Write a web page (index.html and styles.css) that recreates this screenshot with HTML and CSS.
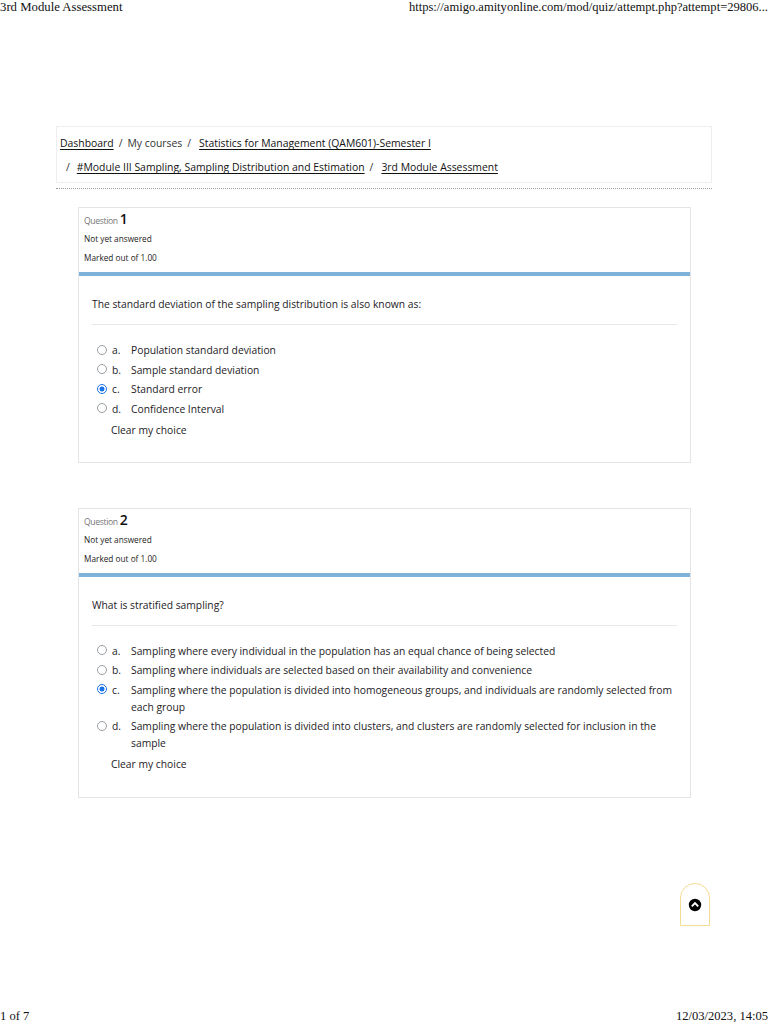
FILE: index.html
```html
<!DOCTYPE html>
<html lang="en">
<head>
<meta charset="utf-8">
<title>3rd Module Assessment</title>
<link rel="stylesheet" href="styles.css">
</head>
<body>
<div class="page">
  <header class="print-row print-top">
    <span class="doc-title">3rd Module Assessment</span>
    <span>https://amigo.amityonline.com/mod/quiz/attempt.php?attempt=29806...</span>
  </header>
  <main class="content">
    <nav class="crumbs">
      <div class="crumb-row">
        <a class="link">Dashboard</a><span class="sep">/</span><span>My courses</span><span class="sep">/</span><a class="link gap">Statistics for Management (QAM601)-Semester I</a>
      </div>
      <div class="crumb-row crumb-second">
        <span class="sep first">/</span><a class="link">#Module III Sampling, Sampling Distribution and Estimation</a><span class="sep">/</span><a class="link gap">3rd Module Assessment</a>
      </div>
    </nav>
    <div class="dots"></div>

    <section class="card card-one">
      <div class="info">
        <div class="q-no"><span class="q-label">Question</span> <b class="q-num">1</b></div>
        <div class="meta">Not yet answered</div>
        <div class="meta">Marked out of 1.00</div>
      </div>
      <div class="body">
        <p class="prompt">The standard deviation of the sampling distribution is also known as:</p>
        <div class="opts">
          <div class="opt"><span class="radio"></span><span class="letter">a.</span><span class="text">Population standard deviation</span></div>
          <div class="opt"><span class="radio"></span><span class="letter">b.</span><span class="text">Sample standard deviation</span></div>
          <div class="opt"><span class="radio on"></span><span class="letter">c.</span><span class="text">Standard error</span></div>
          <div class="opt"><span class="radio"></span><span class="letter">d.</span><span class="text">Confidence Interval</span></div>
        </div>
        <div class="clear">Clear my choice</div>
      </div>
    </section>

    <section class="card card-two">
      <div class="info">
        <div class="q-no"><span class="q-label">Question</span> <b class="q-num">2</b></div>
        <div class="meta">Not yet answered</div>
        <div class="meta">Marked out of 1.00</div>
      </div>
      <div class="body">
        <p class="prompt">What is stratified sampling?</p>
        <div class="opts">
          <div class="opt"><span class="radio"></span><span class="letter">a.</span><span class="text">Sampling where every individual in the population has an equal chance of being selected</span></div>
          <div class="opt"><span class="radio"></span><span class="letter">b.</span><span class="text">Sampling where individuals are selected based on their availability and convenience</span></div>
          <div class="opt"><span class="radio on"></span><span class="letter">c.</span><span class="text">Sampling where the population is divided into homogeneous groups, and individuals are randomly selected from each group</span></div>
          <div class="opt"><span class="radio"></span><span class="letter">d.</span><span class="text">Sampling where the population is divided into clusters, and clusters are randomly selected for inclusion in the sample</span></div>
        </div>
        <div class="clear">Clear my choice</div>
      </div>
    </section>

    <div class="up-wrap">
      <div class="up">
        <svg width="14" height="14" viewBox="0 0 14 14"><circle cx="7" cy="7" r="6.2" fill="#000"/><path d="M3.8 8.4 7 5.2l3.2 3.2" fill="none" stroke="#fff" stroke-width="1.9"/></svg>
      </div>
    </div>
  </main>
  <footer class="print-row print-bottom">
    <span>1 of 7</span>
    <span>12/03/2023, 14:05</span>
  </footer>
</div>
</body>
</html>
```

FILE: styles.css
```css
* { box-sizing: border-box; }
html, body { margin: 0; padding: 0; background: #fff; }
.page {
  width: 768px;
  height: 1024px;
  display: flex;
  flex-direction: column;
  overflow: hidden;
  font-family: "Open Sans", "Noto Sans", sans-serif;
  font-size: 10.3px;
  color: #1d2125;
}
.print-row {
  display: flex;
  justify-content: space-between;
  font-family: "Liberation Serif", serif;
  font-size: 12.55px;
  line-height: 14px;
  color: #111;
}
.doc-title { font-size: 12.75px; }
.print-top { height: 16px; }
.print-bottom { height: 16px; margin-top: auto; padding-top: 1px; }
.content { padding: 110px 56px 0; }
.crumbs {
  height: 57px;
  border: 1px solid #eceef0;
  padding: 7px 3px 0;
  font-size: 10.4px;
}
.crumb-row { display: flex; align-items: center; height: 19px; line-height: 19px; white-space: nowrap; color: #333; }
.crumb-second { margin-top: 5px; padding-left: 3px; }
.link { color: #111; text-decoration: underline; text-underline-offset: 2px; text-decoration-thickness: 1px; }
.sep { margin: 0 5px; color: #333; }
.sep.first { margin-left: 3px; margin-right: 7px; }
.gap { margin-left: 3px; }
.dots { border-top: 1px dotted #999; margin-top: 5px; }
.card {
  margin: 18px 21px 0 22px;
  border: 1px solid #e2e4e7;
}
.card-two { margin-top: 45px; }
.card-two .body { padding-bottom: 24px; }
.info {
  height: 60px;
  padding: 4px 5px 0;
  border-bottom: 4px solid #7fb2d9;
  box-sizing: content-box;
}
.q-no { display: flex; align-items: baseline; gap: 2px; height: 18px; line-height: 18px; margin-top: -2px; }
.q-label { font-size: 8.6px; letter-spacing: -0.35px; color: #777; }
.q-num { font-size: 14px; font-weight: 600; color: #111; }
.meta { font-size: 8.25px; line-height: 13px; height: 13px; margin-top: 4px; color: #222; }
.meta + .meta { margin-top: 6px; }
.body { padding: 20px 13px 23px; }
.prompt {
  margin: 0;
  height: 29px;
  line-height: 16px;
  border-bottom: 1px solid #e6e8ea;
}
.opts { padding-top: 17px; }
.opt { display: flex; line-height: 17px; margin-bottom: 2.5px; padding-left: 5px; }
.radio {
  flex: none;
  width: 10px;
  height: 10px;
  margin-top: 2.5px;
  margin-right: 5px;
  border: 1.5px solid #9a9fa4;
  border-radius: 50%;
  background: #fff;
}
.radio.on { border-color: #1a73e8; background: radial-gradient(circle, #1a73e8 0 2.2px, #fff 2.8px); }
.letter { flex: none; width: 19px; }
.text { flex: 1; }
.clear { margin-top: 4px; padding-left: 19px; line-height: 17px; }
.up-wrap { display: flex; justify-content: flex-end; margin-top: 85px; padding-right: 2px; }
.up {
  width: 30px;
  height: 43px;
  border: 1px solid #f6dc90;
  border-radius: 15px 15px 0 0;
  display: flex;
  align-items: center;
  justify-content: center;
}
```
